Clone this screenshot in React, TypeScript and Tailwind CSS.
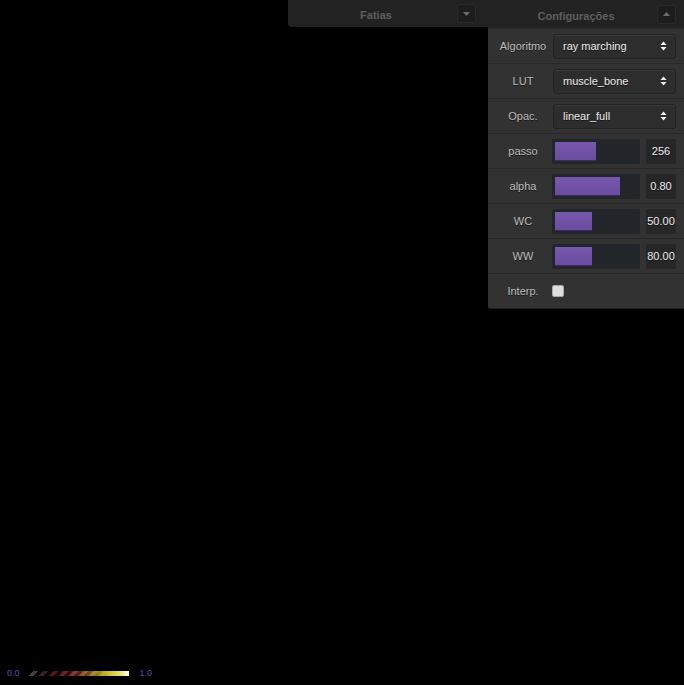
import React from "react";

function Tri({ up }: { up?: boolean }) {
  return (
    <svg width="7" height="4" viewBox="0 0 7 4">
      {up ? <path d="M0 4 L3.5 0 L7 4 Z" fill="#6c6c6c" /> : <path d="M0 0 L7 0 L3.5 4 Z" fill="#6c6c6c" />}
    </svg>
  );
}

function SelectBox({ value }: { value: string }) {
  return (
    <div className="flex items-center justify-between w-[123px] h-[25px] ml-[1px] rounded-[3px] bg-[#2d2d2d] border border-[#232323] shadow-[inset_0_1px_0_#3a3a3a] pl-[9px] pr-[8px]">
      <span className="text-[11px] text-[#eeeeee] [text-shadow:0_1px_0_#111]">{value}</span>
      <svg width="7" height="10" viewBox="0 0 7 10">
        <path d="M0.5 4 L3.5 0.5 L6.5 4 Z" fill="#f2f2f2" />
        <path d="M0.5 6 L3.5 9.5 L6.5 6 Z" fill="#f2f2f2" />
      </svg>
    </div>
  );
}

function SliderRow({ fill, value }: { fill: string; value: string }) {
  return (
    <div className="flex items-center gap-[6px]">
      <div className="w-[88px] h-[25px] rounded-[2px] bg-[#22262a] p-[3px] flex">
        <div className={`${fill} h-full bg-[linear-gradient(to_bottom,#7658ad,#6a4b9f)] shadow-[inset_0_-1px_0_#3e2d63]`} />
      </div>
      <div className="w-[30px] h-[25px] rounded-[2px] bg-[#262626] flex items-center justify-center text-[11px] text-[#eeeeee] [text-shadow:0_1px_0_#111]">
        {value}
      </div>
    </div>
  );
}

function Row({ label, children, last }: { label: string; children: React.ReactNode; last?: boolean }) {
  return (
    <div className={`flex items-center ${last ? "h-[34px]" : "h-[35px] border-b border-[#282828]"}`}>
      <div className="w-[64px] pl-[6px] text-center text-[11px] text-[#bdbdbd] [text-shadow:0_1px_0_#151515]">{label}</div>
      {children}
    </div>
  );
}

export default function App() {
  return (
    <div className="relative w-[684px] h-[685px] bg-black overflow-hidden font-['Liberation_Sans',Arial,sans-serif]">
      <div className="absolute top-0 right-0 flex items-start">
        <div className="w-[200px] h-[27px] bg-[#222222] rounded-bl-[4px] flex items-center">
          <div className="flex-1 pl-[7px] pt-[4px] text-center text-[11px] font-bold text-[#5e5e5e]">Fatias</div>
          <div className="w-[19px] h-[19px] mr-[12px] rounded-[2px] bg-[#1d1d1d] border border-[#2a2a2a] flex items-center justify-center">
            <Tri />
          </div>
        </div>
        <div className="w-[196px] flex flex-col">
          <div className="h-[28px] bg-[#222222] flex items-center">
            <div className="flex-1 pl-[7px] pt-[4px] text-center text-[11px] font-bold text-[#5e5e5e]">Configurações</div>
            <div className="w-[19px] h-[19px] mr-[8px] rounded-[2px] bg-[#1d1d1d] border border-[#2a2a2a] flex items-center justify-center">
              <Tri up />
            </div>
          </div>
          <div className="bg-[#323232] border-t border-b border-t-[#292929] border-b-[#1c1c1c] rounded-bl-[2px]">
            <Row label="Algoritmo">
              <SelectBox value="ray marching" />
            </Row>
            <Row label="LUT">
              <SelectBox value="muscle_bone" />
            </Row>
            <Row label="Opac.">
              <SelectBox value="linear_full" />
            </Row>
            <Row label="passo">
              <SliderRow fill="w-[41px]" value="256" />
            </Row>
            <Row label="alpha">
              <SliderRow fill="w-[65px]" value="0.80" />
            </Row>
            <Row label="WC">
              <SliderRow fill="w-[37px]" value="50.00" />
            </Row>
            <Row label="WW">
              <SliderRow fill="w-[37px]" value="80.00" />
            </Row>
            <Row label="Interp." last>
              <div className="w-[12px] h-[12px] rounded-[2px] bg-[#dedede] border border-[#a8a8a8]" />
            </Row>
          </div>
        </div>
      </div>

      <div className="absolute left-[7px] top-[667px] flex items-center">
        <span className="text-[9px] text-[#5d4fb3]">0.0</span>
        <div className="relative ml-[9px] w-[100px] h-[5px] bg-[linear-gradient(to_right,#4a4a4a,#3a2020_15%,#5a1a1a_30%,#8a3535_45%,#a0742e_60%,#c4b228_76%,#e2e066_90%,#ffffff)]">
          <div className="absolute inset-0 bg-[repeating-linear-gradient(135deg,#000_0_3.5px,transparent_3.5px_7px)] [mask-image:linear-gradient(to_right,#000_15%,transparent_80%)]" />
        </div>
        <span className="ml-[11px] text-[9px] text-[#5d4fb3]">1.0</span>
      </div>
    </div>
  );
}
